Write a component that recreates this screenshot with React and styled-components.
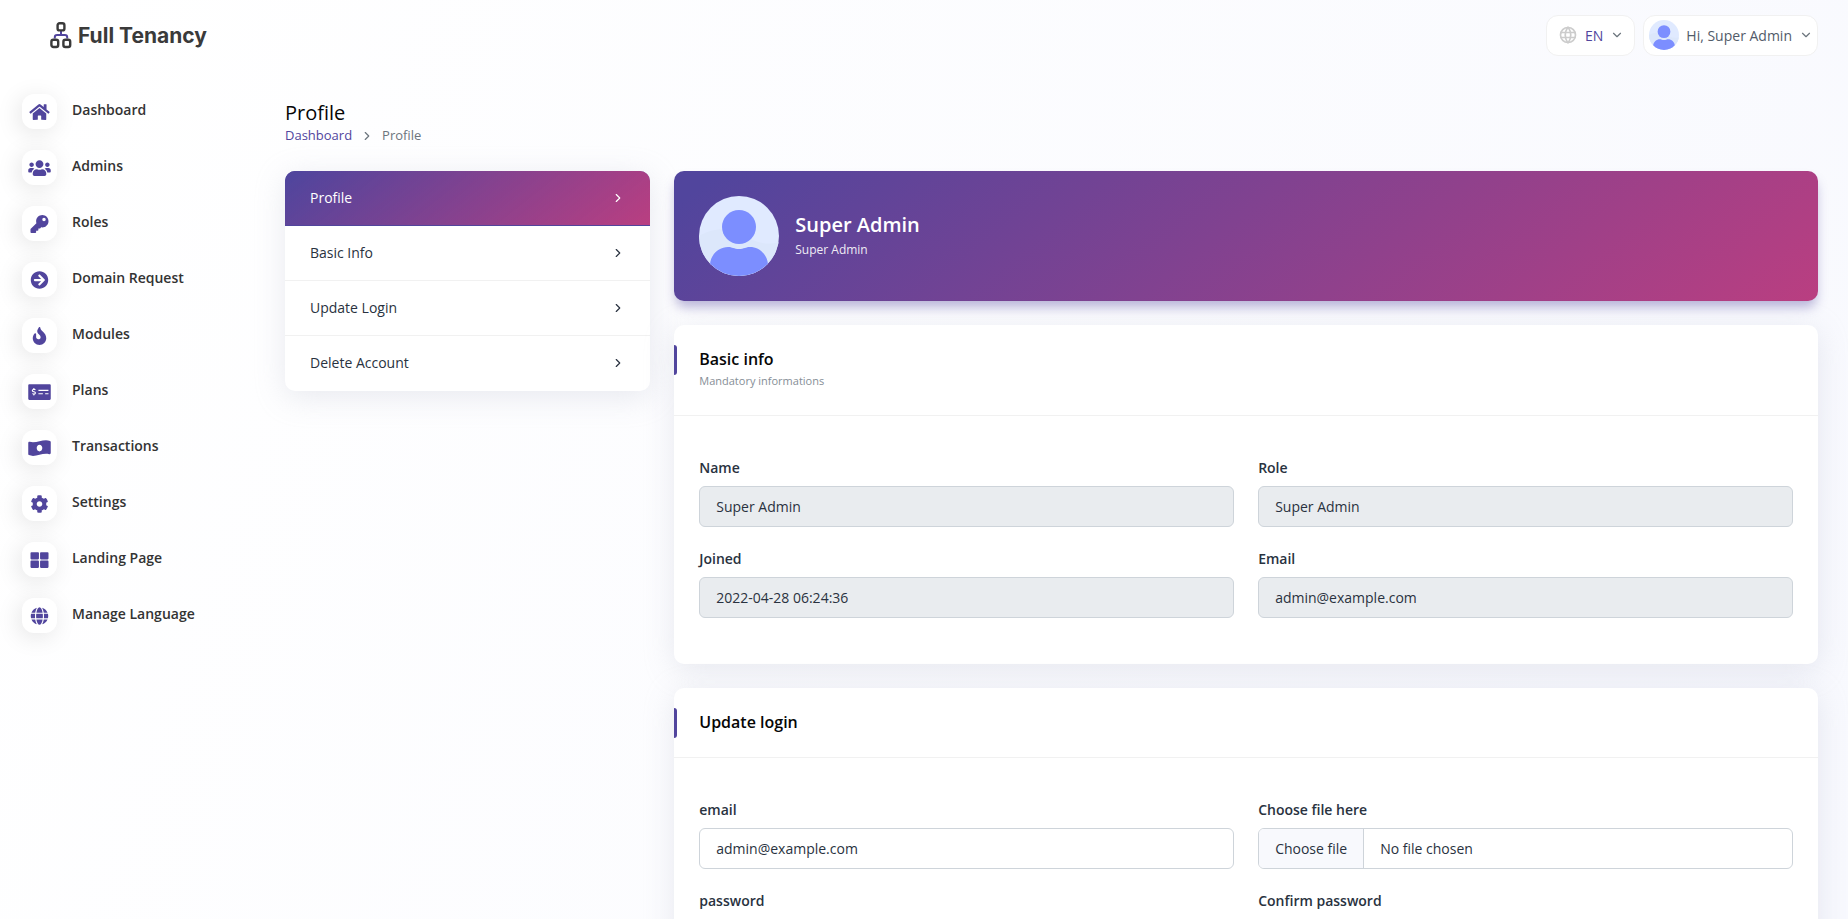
import React, { useState } from 'react'
import styled, { createGlobalStyle, css } from 'styled-components'
import {
  FaHome,
  FaUsers,
  FaKey,
  FaArrowCircleRight,
  FaFire,
  FaMoneyCheckAlt,
  FaCog,
  FaThLarge,
  FaGlobe
} from 'react-icons/fa'
import { TbWorld, TbChevronDown, TbChevronRight } from 'react-icons/tb'

const primary = '#51459d'
const gradient = `linear-gradient(141.55deg, ${primary} 3.46%, rgba(255, 58, 110, 0.6) 99.86%), ${primary}`

const GlobalStyle = createGlobalStyle`
  *, *::before, *::after {
    box-sizing: border-box;
  }
  body {
    margin: 0;
    min-height: 100vh;
    font-family: 'Open Sans', sans-serif;
    font-size: 14px;
    line-height: 21px;
    color: #293240;
    background: linear-gradient(110deg, #ffffff 3%, #f8f9fe 100%) fixed;
  }
  a {
    text-decoration: none;
  }
  button, input {
    font: inherit;
  }
`
const Header = styled.header`
  display: flex;
  align-items: center;
  justify-content: space-between;
  height: 70px;
  padding: 0 30px 0 50px;
`
const Brand = styled.a`
  display: flex;
  align-items: center;
  gap: 6px;
  font-family: Inter, sans-serif;
  font-size: 21px;
  font-weight: 700;
  color: #3a3a3a;
`
const HeaderActions = styled.div`
  display: flex;
  gap: 8px;
`
const HeaderButton = styled.button`
  display: flex;
  align-items: center;
  gap: 7px;
  height: 41px;
  padding: ${props => props.$user ? '0 4px 0 5px' : '0 10px 0 11px'};
  border: 1px solid #f1f1f1;
  border-radius: 12px;
  background: #fff;
  font-weight: 500;
  color: ${props => props.$user ? '#525b69' : primary};
  cursor: pointer;

  > svg:last-child {
    color: #6c757d;
  }
`
const Layout = styled.div`
  display: flex;
  align-items: flex-start;
`
const Sidebar = styled.nav`
  flex: 0 0 255px;
  padding: 24px 22px;
`
const Menu = styled.ul`
  display: grid;
  gap: 21px;
  margin: 0;
  padding: 0;
  list-style: none;
`
const MenuLink = styled.a`
  display: flex;
  gap: 15px;
  font-weight: 600;
  line-height: 32px;
  color: #333;
`
const MenuIcon = styled.span`
  display: flex;
  align-items: center;
  justify-content: center;
  width: 35px;
  height: 35px;
  border-radius: 12px;
  background: #fff;
  box-shadow: -3px 4px 23px rgba(0, 0, 0, 0.1);
  color: ${primary};

  svg {
    flex: none;
    width: 23px;
    height: 18px;
  }
`
const Main = styled.main`
  flex: 1;
  min-width: 0;
  padding: 30px 30px 24px;
`
const PageTitle = styled.h4`
  margin: 0;
  font-size: 20px;
  font-weight: 500;
  line-height: 25px;
  color: #060606;
`
const Breadcrumb = styled.nav`
  display: flex;
  align-items: center;
  gap: 8px;
  margin-bottom: 25px;
  font-size: 13px;
  color: #6c757d;

  a {
    color: ${primary};
  }
`
const Columns = styled.div`
  display: grid;
  grid-template-columns: repeat(12, 1fr);
  align-items: start;
  gap: 24px;
`
const surface = css`
  border-radius: 10px;
  background: #fff;
  box-shadow: 0 6px 30px rgba(182, 186, 203, 0.3);
`
const TabList = styled.div`
  ${surface}
  grid-column: span 3;
  overflow: hidden;
`
const Tab = styled.a`
  display: flex;
  align-items: center;
  justify-content: space-between;
  padding: 16px 25px 17px;
  border-bottom: 1px solid #f1f1f1;
  color: #293240;

  &:last-child {
    border-bottom-color: transparent;
  }
  ${props => props.$active && css`
    border-bottom-color: ${primary};
    background: ${gradient};
    color: #fff;
  `}
`
const Content = styled.div`
  display: grid;
  grid-column: span 9;
  gap: 24px;
`
const Banner = styled.section`
  display: flex;
  align-items: center;
  gap: 16px;
  padding: 25px;
  border-radius: 10px;
  background: ${gradient};
  box-shadow: 0 8px 12px -2px rgba(81, 69, 157, 0.4);
  color: #fff;
`
const BannerName = styled.h4`
  margin: 0 0 4px;
  font-size: 20px;
  font-weight: 600;
  line-height: 24px;
`
const BannerRole = styled.div`
  font-size: 12px;
  line-height: 18px;
  opacity: 0.9;
`
const Card = styled.section`
  ${surface}
`
const CardHeader = styled.header`
  position: relative;
  padding: 25px;
  border-bottom: 1px solid #f1f1f1;

  &::before {
    content: '';
    position: absolute;
    top: 20px;
    left: 0;
    width: 3px;
    height: 30px;
    border-radius: 0 3px 3px 0;
    background: ${primary};
  }
`
const CardTitle = styled.h5`
  margin: 0;
  font-size: 16px;
  font-weight: 600;
  line-height: 19px;
  color: #060606;
`
const CardHint = styled.small`
  display: block;
  margin: 3px 0 1px;
  font-size: 11px;
  line-height: 17px;
  color: #868e96;
`
const CardBody = styled.div`
  display: grid;
  grid-template-columns: 1fr 1fr;
  gap: 21px 24px;
  padding: 41px 25px 46px;
`
const Label = styled.label`
  display: block;
  margin-bottom: 8px;
  font-weight: 600;
`
const control = css`
  width: 100%;
  height: 41px;
  border: 1px solid #ced4da;
  border-radius: 6px;
  background: #fff;
  color: #293240;
`
const Input = styled.input`
  ${control}
  display: block;
  padding: 0 16px;
  outline: none;

  &:disabled {
    background: #e9ecef;
  }
`
const FileBox = styled.div`
  ${control}
  position: relative;
  display: flex;
  line-height: 39px;
  overflow: hidden;

  /* the native picker stays on top and takes the clicks */
  input {
    position: absolute;
    inset: 0;
    width: 100%;
    opacity: 0;
    cursor: pointer;
  }
`
const FileButton = styled.span`
  padding: 0 16px;
  border-right: 1px solid #ced4da;
  background: #f8f9fd;
`
const FileName = styled.span`
  padding: 0 16px;
`

const Logo = () => (
  <svg width='22' height='28' viewBox='0 0 22 28' fill='none' strokeWidth='2.4'>
    <path d='M11 10v4M4.8 17.5v-1.2q0-2.3 2.3-2.3h7.8q2.3 0 2.3 2.3v1.2' stroke={primary} strokeWidth='2' />
    <g stroke='#3a3a3a'>
      <rect x='7.6' y='2.2' width='6.8' height='7.2' rx='2' />
      <rect x='1.4' y='18.8' width='6.8' height='7.2' rx='2' />
      <rect x='13.4' y='18.8' width='6.8' height='7.2' rx='2' />
    </g>
  </svg>
)

const MoneyIcon = () => (
  <svg viewBox='0 0 640 512' fill='currentColor' fillRule='evenodd'>
    <path d='M621 54C582 38 544 32 505 32C382 32 258 94 135 94C104 94 73 90 43 81C20 74 0 90 0 111V428C0 441 7 453 19 458C58 474 96 480 135 480C258 480 382 418 505 418C536 418 567 422 597 431C620 438 640 422 640 401V84C640 71 633 59 621 54ZM320 352C276 352 240 309 240 256S276 160 320 160S400 203 400 256S364 352 320 352Z' />
  </svg>
)

const Avatar = ({ size, id }) => (
  <svg width={size} height={size} viewBox='0 0 80 80'>
    <clipPath id={id}>
      <circle cx='40' cy='40' r='40' />
    </clipPath>
    <g clipPath={`url(#${id})`}>
      <rect width='80' height='80' fill='#e0eaff' />
      <path d='M0 40C12 33 28 30 42 38S66 50 80 46V80H0Z' fill='#dce7fb' />
      <circle cx='40' cy='31' r='17' fill='#7c8eff' />
      <path d='M11 80V68C12 58 20 51 29 51C33 51 35 53 40 53S47 51 51 51C60 51 68 58 69 68V80Z' fill='#7c8eff' />
    </g>
  </svg>
)

const menu = [
  { title: 'Dashboard', icon: FaHome },
  { title: 'Admins', icon: FaUsers },
  { title: 'Roles', icon: FaKey },
  { title: 'Domain Request', icon: FaArrowCircleRight },
  { title: 'Modules', icon: FaFire },
  { title: 'Plans', icon: FaMoneyCheckAlt },
  { title: 'Transactions', icon: MoneyIcon },
  { title: 'Settings', icon: FaCog },
  { title: 'Landing Page', icon: FaThLarge },
  { title: 'Manage Language', icon: FaGlobe }
]

const tabs = [
  { title: 'Profile', target: 'profile' },
  { title: 'Basic Info', target: 'basic-info' },
  { title: 'Update Login', target: 'update-login' },
  { title: 'Delete Account', target: 'delete-account' }
]

const Field = ({ id, label, ...rest }) => (
  <div>
    <Label htmlFor={id}>{label}</Label>
    <Input id={id} {...rest} />
  </div>
)

const FileField = ({ id, label }) => {
  const [name, setName] = useState('No file chosen')

  return (
    <div>
      <Label htmlFor={id}>{label}</Label>
      <FileBox>
        <FileButton>Choose file</FileButton>
        <FileName>{name}</FileName>
        <input
          id={id}
          type='file'
          onChange={(e) => setName(e.target.files.length ? e.target.files[0].name : 'No file chosen')}
        />
      </FileBox>
    </div>
  )
}

const App = () => {
  const [active, setActive] = useState('profile')

  return (
    <>
      <GlobalStyle />
      <Header>
        <Brand href='#'>
          <Logo />
          Full Tenancy
        </Brand>
        <HeaderActions>
          <HeaderButton type='button'>
            <TbWorld size={20} color='#ccc' />
            EN
            <TbChevronDown size={14} />
          </HeaderButton>
          <HeaderButton type='button' $user>
            <Avatar size={30} id='avatar-small' />
            Hi, Super Admin
            <TbChevronDown size={14} />
          </HeaderButton>
        </HeaderActions>
      </Header>
      <Layout>
        <Sidebar>
          <Menu>
            {menu.map(({ title, icon: Icon }) => (
              <li key={title}>
                <MenuLink href='#'>
                  <MenuIcon><Icon /></MenuIcon>
                  {title}
                </MenuLink>
              </li>
            ))}
          </Menu>
        </Sidebar>
        <Main>
          <PageTitle>Profile</PageTitle>
          <Breadcrumb>
            <a href='#'>Dashboard</a>
            <TbChevronRight size={14} />
            <span>Profile</span>
          </Breadcrumb>
          <Columns>
            <TabList>
              {tabs.map(({ title, target }) => (
                <Tab
                  key={target}
                  href={`#${target}`}
                  $active={active === target}
                  onClick={() => setActive(target)}
                >
                  {title}
                  <TbChevronRight size={14} />
                </Tab>
              ))}
            </TabList>
            <Content>
              <Banner id='profile'>
                <Avatar size={80} id='avatar-large' />
                <div>
                  <BannerName>Super Admin</BannerName>
                  <BannerRole>Super Admin</BannerRole>
                </div>
              </Banner>
              <Card id='basic-info'>
                <CardHeader>
                  <CardTitle>Basic info</CardTitle>
                  <CardHint>Mandatory informations</CardHint>
                </CardHeader>
                <CardBody>
                  <Field id='name' label='Name' defaultValue='Super Admin' disabled />
                  <Field id='role' label='Role' defaultValue='Super Admin' disabled />
                  <Field id='joined' label='Joined' defaultValue='2022-04-28 06:24:36' disabled />
                  <Field id='email' label='Email' defaultValue='admin@example.com' disabled />
                </CardBody>
              </Card>
              <Card id='update-login'>
                <CardHeader>
                  <CardTitle>Update login</CardTitle>
                </CardHeader>
                <CardBody>
                  <Field id='login-email' label='email' type='email' defaultValue='admin@example.com' />
                  <FileField id='login-file' label='Choose file here' />
                  <Field id='password' label='password' type='password' />
                  <Field id='confirm' label='Confirm password' type='password' />
                </CardBody>
              </Card>
            </Content>
          </Columns>
        </Main>
      </Layout>
    </>
  )
}

export default App
